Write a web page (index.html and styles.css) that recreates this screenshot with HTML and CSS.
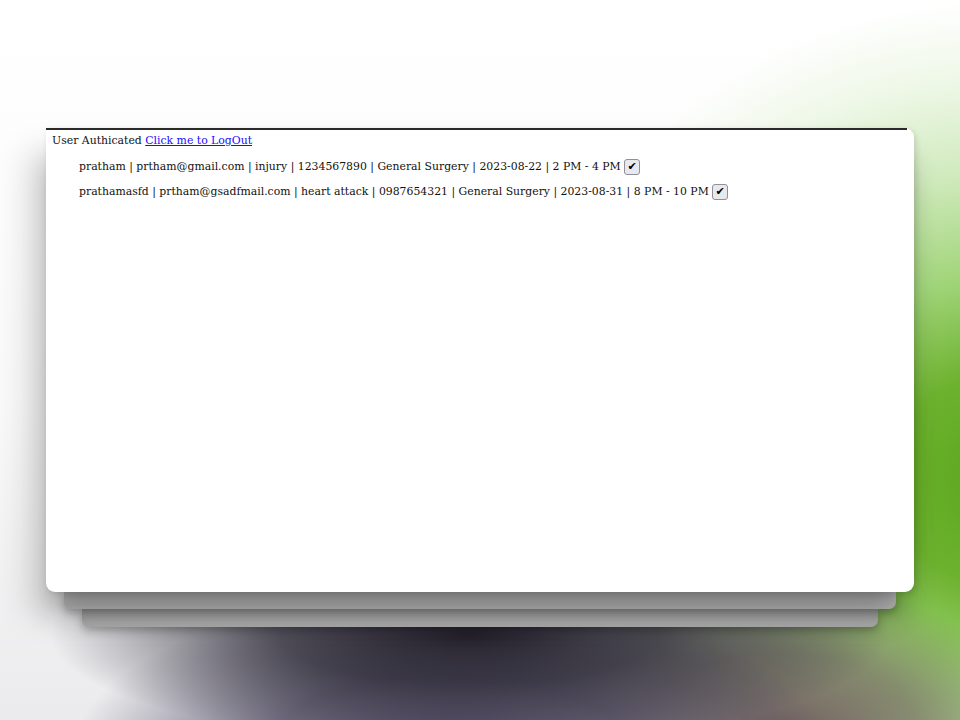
FILE: index.html
```html
<!DOCTYPE html>
<html>
<head>
<meta charset="utf-8">
<link rel="stylesheet" href="styles.css">
</head>
<body>
<div class="stage">
  <div class="card">
    <div class="auth">User Authicated <a href="#" class="logout">Click me to LogOut</a></div>
    <ul class="list">
      <li>pratham | prtham@gmail.com | injury | 1234567890 | General Surgery | 2023-08-22 | 2 PM - 4 PM <button class="done">✔</button></li>
      <li>prathamasfd | prtham@gsadfmail.com | heart attack | 0987654321 | General Surgery | 2023-08-31 | 8 PM - 10 PM <button class="done">✔</button></li>
    </ul>
  </div>
  <div class="layer layer2"></div>
  <div class="layer layer3"></div>
</div>
</body>
</html>
```
FILE: styles.css
```css
html, body {
  margin: 0;
  height: 100%;
}
body {
  width: 960px;
  height: 720px;
  overflow: hidden;
  background:
    radial-gradient(ellipse 420px 110px at 470px 635px, rgba(36,33,44,1) 0%, rgba(40,37,50,0.75) 45%, rgba(50,46,62,0) 100%),
    radial-gradient(ellipse 380px 170px at 450px 760px, rgba(74,68,96,1) 0%, rgba(80,74,100,0.75) 50%, rgba(90,88,110,0) 100%),
    radial-gradient(ellipse 260px 160px at 780px 740px, rgba(108,90,90,1) 0%, rgba(105,88,88,0.6) 55%, rgba(105,88,88,0) 100%),
    radial-gradient(ellipse 500px 480px at 1000px 480px, #5ba51c 0%, #6db22f 22%, #a0d478 42%, #d0eabd 64%, #eff8e8 84%, rgba(255,255,255,0) 100%),
    linear-gradient(180deg, #ffffff 0%, #fafafa 55%, #ebebed 100%);
  font-family: "DejaVu Serif", serif;
}
.stage {
  padding-top: 128px;
  padding-left: 46px;
  width: 868px;
  display: flex;
  flex-direction: column;
  align-items: center;
}
.card {
  position: relative;
  box-sizing: border-box;
  width: 868px;
  height: 464px;
  background: #fff;
  border-radius: 0 9px 9px 9px;
  padding: 6px;
  box-shadow: 0 26px 30px -8px rgba(0,0,0,0.3), -18px 24px 34px rgba(0,0,0,0.14), 2px 2px 6px rgba(0,0,0,0.12);
  z-index: 3;
  font-size: 10.86px;
  color: #111;
}
.card::before {
  content: "";
  position: absolute;
  left: 0;
  top: 0;
  right: 7px;
  height: 1.5px;
  background: #2a2a2a;
}
.auth {
  line-height: 14px;
}
.logout {
  color: #1a0dff;
  text-decoration: underline;
}
.list {
  list-style: none;
  margin: 6px 0 0 0;
  padding: 0 0 0 27px;
}
.list li {
  line-height: 25px;
  height: 25px;
}
.done {
  font-family: "DejaVu Sans", sans-serif;
  font-size: 11px;
  width: 16px;
  height: 16px;
  padding: 0;
  margin: 0;
  vertical-align: middle;
  background: #e9e9ed;
  border: 1px solid #8f8f9d;
  border-radius: 3px;
  color: #000;
  line-height: 14px;
}
.layer {
  position: relative;
  border-radius: 0 0 7px 7px;
  box-shadow: 0 4px 8px rgba(0,0,0,0.25);
}
.layer2 {
  width: 832px;
  height: 17px;
  background: #c8c8c8;
  z-index: 2;
}
.layer3 {
  width: 796px;
  height: 18px;
  background: #afafaf;
  z-index: 1;
}
```
